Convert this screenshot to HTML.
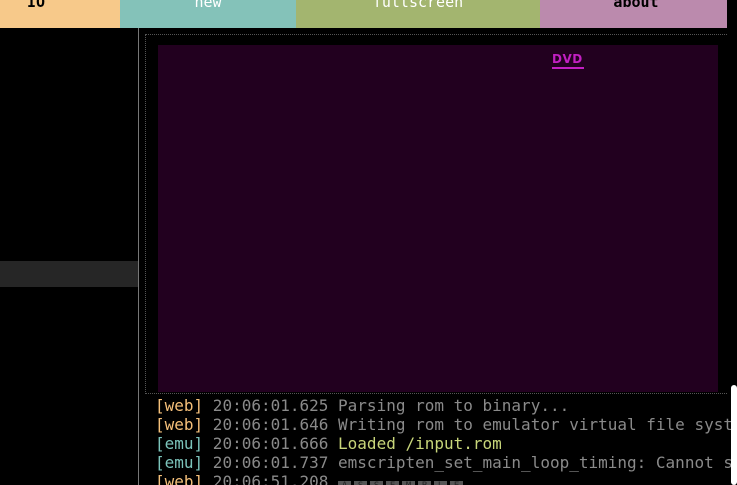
<!DOCTYPE html>
<html style="overflow:hidden;width:737px;height:485px"><head><style>
*{margin:0;padding:0;box-sizing:border-box}
body{width:737px;height:485px;background:#000;overflow:hidden;position:relative;font-family:"DejaVu Sans Mono","Liberation Mono",monospace}
.nav div{position:absolute;top:0;height:28px;font-size:15px;text-align:center;line-height:4px;overflow:hidden}
.log{position:absolute;left:155px;top:396px;font-size:16px;line-height:19px;white-space:pre;color:#8a8a8a;height:89px;overflow:hidden;width:576px}
.w{color:#f5c07a}.e{color:#7cc4bb}.g{color:#c8d67a}
.k{display:inline-block;width:13px;height:11px;background:#555;margin-right:3px;font-size:9px;line-height:11px;text-align:center;color:#222;vertical-align:-1px}
</style></head><body>
<div class="nav">
<div style="left:0;width:120px;background:#f7c98a;color:#000;font-weight:bold;text-align:left;padding-left:27px">IO</div>
<div style="left:120px;width:176px;background:#84c2b9;color:#fff">new</div>
<div style="left:296px;width:244px;background:#a3b56f;color:#fff">fullscreen</div>
<div style="left:540px;width:187px;background:#bb8aad;color:#000;font-weight:bold;padding-left:5px">about</div>
</div>
<div style="position:absolute;left:0;top:261px;width:138px;height:26px;background:#262626"></div>
<div style="position:absolute;left:138px;top:28px;width:1px;height:457px;background:#777"></div>
<div style="position:absolute;left:145px;top:34px;width:582px;height:360px;border-top:1px dotted #555;border-left:1px dotted #555;border-bottom:1px dotted #555"></div>
<div style="position:absolute;left:158px;top:45px;width:560px;height:347px;background:#22001f"></div>
<div style="position:absolute;left:552px;top:52px;font-family:'DejaVu Sans',sans-serif;font-weight:bold;font-size:12px;color:#c21fc2;letter-spacing:0.5px">DVD</div>
<div style="position:absolute;left:552px;top:67px;width:32px;height:2px;background:#c21fc2"></div>
<div class="log"><span class="w">[web]</span> 20:06:01.625 Parsing rom to binary...
<span class="w">[web]</span> 20:06:01.646 Writing rom to emulator virtual file system
<span class="e">[emu]</span> 20:06:01.666 <span class="g">Loaded /input.rom</span>
<span class="e">[emu]</span> 20:06:01.737 emscripten_set_main_loop_timing: Cannot set
<span class="w">[web]</span> 20:06:51.208 <span class="k">A</span><span class="k">S</span><span class="k">S</span><span class="k">E</span><span class="k">M</span><span class="k">B</span><span class="k">L</span><span class="k">E</span></div>
<div style="position:absolute;left:731px;top:385px;width:6px;height:100px;background:#fff;border-radius:3px"></div>
</body></html>
